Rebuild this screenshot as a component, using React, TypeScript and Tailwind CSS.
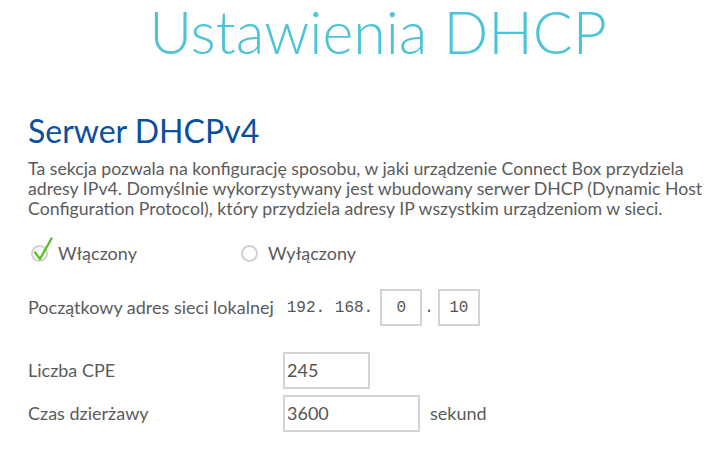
import React from 'react';

// Small round indicator used by the on/off choice
const RadioMark: React.FC<{ checked?: boolean }> = ({ checked }) => (
  <span className="relative inline-block w-[17px] h-[17px]">
    <span className="absolute inset-0 rounded-full border-2 border-[#d2d2d2] bg-white" />
    {checked && (
      <svg
        className="absolute left-[1px] top-[-8px]"
        width="22"
        height="24"
        viewBox="0 0 22 24"
        fill="none"
      >
        <path
          d="M3 15.5 L8 22 L19.5 1.5"
          stroke="#5cc12b"
          strokeWidth="2.4"
          strokeLinecap="round"
          strokeLinejoin="round"
        />
      </svg>
    )}
  </span>
);

const Box: React.FC<{ value: string; w: string; center?: boolean; mono?: boolean }> = ({
  value,
  w,
  center,
  mono,
}) => (
  <div
    className={`${w} h-[37px] border-2 border-[#d4d4d4] bg-white flex items-center text-[#555] ${
      center ? 'justify-center' : 'pl-[2px]'
    } ${mono ? "font-['Liberation_Mono',monospace] text-[16px]" : 'text-[18px]'}`}
  >
    {value}
  </div>
);

const App: React.FC = () => {
  return (
    <div className="w-[720px] h-[449px] overflow-hidden bg-white font-['Lato',sans-serif]">
      <h1 className="pl-[36px] pt-[2px] text-center text-[59px] font-light leading-none text-[#4cc3d8]">
        Ustawienia DHCP
      </h1>

      <div className="pl-[28px]">
        <h2 className="mt-[52px] text-[32px] leading-[36px] text-[#0b4f9e]">Serwer DHCPv4</h2>

        <p className="mt-[10px] w-[680px] text-[17.7px] leading-[20px] text-[#5b5b5b]">
          Ta sekcja pozwala na konfigurację sposobu, w jaki urządzenie Connect Box przydziela
          adresy IPv4. Domyślnie wykorzystywany jest wbudowany serwer DHCP (Dynamic Host
          Configuration Protocol), który przydziela adresy IP wszystkim urządzeniom w sieci.
        </p>

        <div className="mt-[21px] flex items-center text-[18px] text-[#5b5b5b] pl-[3px]">
          <label className="flex items-center gap-[10px] w-[210px]">
            <RadioMark checked />
            <span>Włączony</span>
          </label>
          <label className="flex items-center gap-[10px]">
            <RadioMark />
            <span>Wyłączony</span>
          </label>
        </div>

        <div className="mt-[22px] flex items-center text-[18px] text-[#5b5b5b]">
          <span>Początkowy adres sieci lokalnej</span>
          <span className="ml-[13px] font-['Liberation_Mono',monospace] text-[16px] text-[#555]">
            192.&nbsp;168.
          </span>
          <div className="ml-[7px]">
            <Box value="0" w="w-[42px]" center mono />
          </div>
          <span className="ml-[2px] mr-[4px] font-['Liberation_Mono',monospace] text-[16px] text-[#555]">
            .
          </span>
          <Box value="10" w="w-[42px]" center mono />
        </div>

        <div className="mt-[26px] flex items-center text-[18px] text-[#5b5b5b]">
          <span className="w-[255px]">Liczba CPE</span>
          <Box value="245" w="w-[87px]" />
        </div>

        <div className="mt-[6px] flex items-center text-[18px] text-[#5b5b5b]">
          <span className="w-[255px]">Czas dzierżawy</span>
          <Box value="3600" w="w-[137px]" />
          <span className="ml-[10px]">sekund</span>
        </div>
      </div>
    </div>
  );
};

export default App;
